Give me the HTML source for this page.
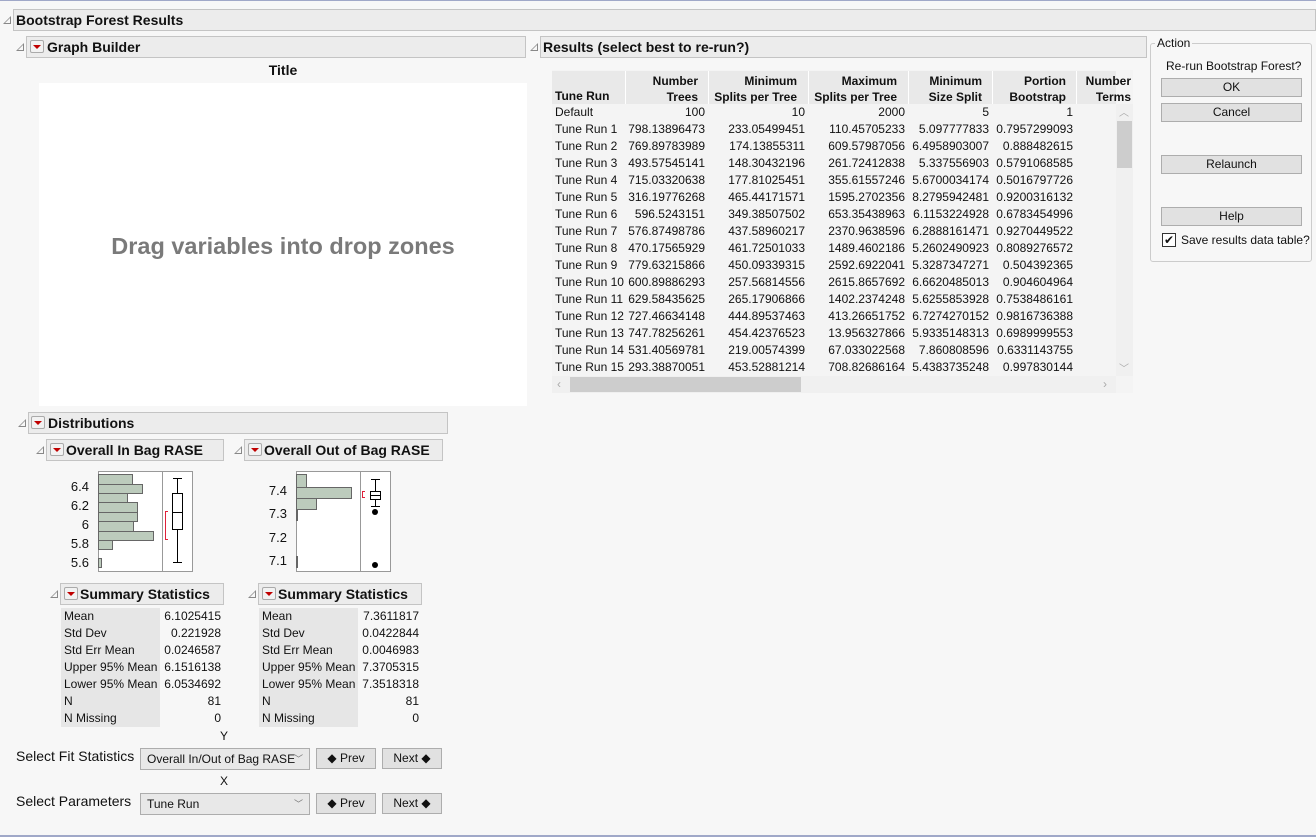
<!DOCTYPE html>
<html><head><meta charset="utf-8"><style>
*{margin:0;padding:0;box-sizing:border-box}
body{width:1316px;height:837px;background:#f7f7f7;font-family:"Liberation Sans",Arial,sans-serif;font-size:12px;color:#111;position:relative;overflow:hidden}
.a{position:absolute;white-space:nowrap}
.hdr{position:absolute;background:#ececec;border:1px solid #c4c4c4;font-weight:bold;font-size:14px;line-height:20px;padding-left:2px}
.tri{position:absolute;width:0;height:0;border-left:8px solid transparent;border-bottom:8px solid #888;}
.tri:after{content:"";position:absolute;left:-6px;top:2px;width:0;height:0;border-left:5px solid transparent;border-bottom:5px solid #f7f7f7}
.rb{position:absolute;width:14px;height:13px;border:1px solid #aaa;background:#f2f2f2;border-radius:2px}
.rb:after{content:"";position:absolute;left:2px;top:4px;border-left:4px solid transparent;border-right:4px solid transparent;border-top:4px solid #c00000}
.btn{position:absolute;background:#e1e1e1;border:1px solid #adadad;text-align:center;font-size:12px;line-height:16px}
.r{text-align:right}
.bar{position:absolute;background:#bccbbc;border:1px solid #666}
</style></head><body>
<div class="a" style="left:0;top:0;width:1316px;height:1px;background:#a0a8c8"></div>
<div class="a" style="left:0;top:835px;width:1316px;height:2px;background:#a0a8c8"></div>

<div class="tri" style="left:3px;top:16px"></div>
<div class="hdr" style="left:13px;top:9px;width:1303px;height:22px">Bootstrap Forest Results</div>

<div class="tri" style="left:16px;top:43px"></div>
<div class="hdr" style="left:26px;top:36px;width:500px;height:22px;padding-left:20px">Graph Builder</div>
<div class="rb" style="left:30px;top:40px"></div>
<div class="a" style="left:39px;top:62px;width:488px;text-align:center;font-weight:bold;font-size:14px">Title</div>
<div class="a" style="left:39px;top:83px;width:488px;height:323px;background:#fff"></div>
<div class="a" style="left:39px;top:233px;width:488px;text-align:center;font-weight:bold;font-size:23.5px;color:#7a7a7a">Drag variables into drop zones</div>

<div class="tri" style="left:530px;top:43px"></div>
<div class="hdr" style="left:540px;top:36px;width:607px;height:22px">Results (select best to re-run?)</div>

<!-- table -->
<div class="a" style="left:552px;top:70px;width:581px;height:323px;background:#f4f4f4"></div>
<div class="a" style="left:552px;top:71px;width:564px;height:33px;background:#e9e9e9"></div>
<div class="a" style="left:625px;top:71px;width:1px;height:33px;background:#fff"></div>
<div class="a" style="left:708px;top:71px;width:1px;height:33px;background:#fff"></div>
<div class="a" style="left:808px;top:71px;width:1px;height:33px;background:#fff"></div>
<div class="a" style="left:908px;top:71px;width:1px;height:33px;background:#fff"></div>
<div class="a" style="left:992px;top:71px;width:1px;height:33px;background:#fff"></div>
<div class="a" style="left:1076px;top:71px;width:1px;height:33px;background:#fff"></div>
<div class="a" style="left:555px;top:89px;font-weight:bold">Tune Run</div>
<div class="a r" style="left:605px;top:73px;width:93px;font-weight:bold;line-height:16px">Number<br>Trees</div>
<div class="a r" style="left:697px;top:73px;width:100px;font-weight:bold;line-height:16px">Minimum<br>Splits per Tree</div>
<div class="a r" style="left:797px;top:73px;width:100px;font-weight:bold;line-height:16px">Maximum<br>Splits per Tree</div>
<div class="a r" style="left:897px;top:73px;width:85px;font-weight:bold;line-height:16px">Minimum<br>Size Split</div>
<div class="a r" style="left:980px;top:73px;width:86px;font-weight:bold;line-height:16px">Portion<br>Bootstrap</div>
<div class="a r" style="left:1070px;top:73px;width:61px;font-weight:bold;line-height:16px;overflow:hidden">Number<br>Terms</div>
<div class="a" style="left:555px;top:104px;line-height:17px">Default<br>Tune Run 1<br>Tune Run 2<br>Tune Run 3<br>Tune Run 4<br>Tune Run 5<br>Tune Run 6<br>Tune Run 7<br>Tune Run 8<br>Tune Run 9<br>Tune Run 10<br>Tune Run 11<br>Tune Run 12<br>Tune Run 13<br>Tune Run 14<br>Tune Run 15</div>
<div class="a r" style="left:605px;top:104px;width:100px;line-height:17px">100<br>798.13896473<br>769.89783989<br>493.57545141<br>715.03320638<br>316.19776268<br>596.5243151<br>576.87498786<br>470.17565929<br>779.63215866<br>600.89886293<br>629.58435625<br>727.46634148<br>747.78256261<br>531.40569781<br>293.38870051</div>
<div class="a r" style="left:705px;top:104px;width:100px;line-height:17px">10<br>233.05499451<br>174.13855311<br>148.30432196<br>177.81025451<br>465.44171571<br>349.38507502<br>437.58960217<br>461.72501033<br>450.09339315<br>257.56814556<br>265.17906866<br>444.89537463<br>454.42376523<br>219.00574399<br>453.52881214</div>
<div class="a r" style="left:805px;top:104px;width:100px;line-height:17px">2000<br>110.45705233<br>609.57987056<br>261.72412838<br>355.61557246<br>1595.2702356<br>653.35438963<br>2370.9638596<br>1489.4602186<br>2592.6922041<br>2615.8657692<br>1402.2374248<br>413.26651752<br>13.956327866<br>67.033022568<br>708.82686164</div>
<div class="a r" style="left:889px;top:104px;width:100px;line-height:17px">5<br>5.097777833<br>6.4958903007<br>5.337556903<br>5.6700034174<br>8.2795942481<br>6.1153224928<br>6.2888161471<br>5.2602490923<br>5.3287347271<br>6.6620485013<br>5.6255853928<br>6.7274270152<br>5.9335148313<br>7.860808596<br>5.4383735248</div>
<div class="a r" style="left:973px;top:104px;width:100px;line-height:17px">1<br>0.7957299093<br>0.888482615<br>0.5791068585<br>0.5016797726<br>0.9200316132<br>0.6783454996<br>0.9270449522<br>0.8089276572<br>0.504392365<br>0.904604964<br>0.7538486161<br>0.9816736388<br>0.6989999553<br>0.6331143755<br>0.997830144</div>
<div class="a" style="left:1116px;top:104px;width:17px;height:272px;background:#f0f0f0"></div>
<div class="a" style="left:1117px;top:121px;width:15px;height:47px;background:#cdcdcd"></div>
<div class="a" style="left:1119px;top:104px;font-size:10px;color:#aaa">︿</div>
<div class="a" style="left:1119px;top:360px;font-size:10px;color:#aaa">﹀</div>
<div class="a" style="left:552px;top:376px;width:564px;height:17px;background:#f0f0f0"></div>
<div class="a" style="left:570px;top:377px;width:231px;height:15px;background:#cdcdcd"></div>
<div class="a" style="left:557px;top:377px;color:#aaa">‹</div>
<div class="a" style="left:1103px;top:377px;color:#aaa">›</div>

<!-- Action -->
<div class="a" style="left:1150px;top:43px;width:162px;height:219px;border:1px solid #ccc;border-radius:3px"></div>
<div class="a" style="left:1155px;top:36px;background:#f7f7f7;padding:0 2px">Action</div>
<div class="a" style="left:1166px;top:59px">Re-run Bootstrap Forest?</div>
<div class="btn" style="left:1161px;top:78px;width:141px;height:19px">OK</div>
<div class="btn" style="left:1161px;top:103px;width:141px;height:19px">Cancel</div>
<div class="btn" style="left:1161px;top:155px;width:141px;height:19px">Relaunch</div>
<div class="btn" style="left:1161px;top:207px;width:141px;height:19px">Help</div>
<div class="a" style="left:1162px;top:233px;width:14px;height:14px;border:1px solid #333;background:#fff;font-size:12px;line-height:12px;text-align:center">✔</div>
<div class="a" style="left:1181px;top:233px">Save results data table?</div>

<!-- Distributions -->
<div class="tri" style="left:18px;top:419px"></div>
<div class="hdr" style="left:28px;top:412px;width:420px;height:22px;padding-left:19px">Distributions</div>
<div class="rb" style="left:31px;top:416px"></div>

<div class="tri" style="left:36px;top:446px"></div>
<div class="hdr" style="left:46px;top:439px;width:178px;height:22px;padding-left:19px">Overall In Bag RASE</div>
<div class="rb" style="left:50px;top:443px"></div>
<div class="tri" style="left:234px;top:446px"></div>
<div class="hdr" style="left:244px;top:439px;width:199px;height:22px;padding-left:19px">Overall Out of Bag RASE</div>
<div class="rb" style="left:248px;top:443px"></div>

<!-- plot 1 -->
<div class="a" style="left:98px;top:471px;width:95px;height:101px;background:#fff;border:1px solid #999"></div>
<div class="a" style="left:162px;top:471px;width:1px;height:101px;background:#999"></div>
<div class="bar" style="left:98px;top:474px;width:35px;height:11px"></div>
<div class="bar" style="left:98px;top:484px;width:45px;height:10px"></div>
<div class="bar" style="left:98px;top:493px;width:30px;height:10px"></div>
<div class="bar" style="left:98px;top:502px;width:40px;height:11px"></div>
<div class="bar" style="left:98px;top:512px;width:40px;height:10px"></div>
<div class="bar" style="left:98px;top:521px;width:36px;height:11px"></div>
<div class="bar" style="left:98px;top:531px;width:56px;height:10px"></div>
<div class="bar" style="left:98px;top:540px;width:15px;height:10px"></div>
<div class="bar" style="left:98px;top:558px;width:4px;height:10px"></div>
<div class="a r" style="left:60px;top:477px;width:29px;line-height:19px;font-size:13px">6.4<br>6.2<br>6<br>5.8<br>5.6</div>
<div class="a" style="left:177px;top:478px;width:1px;height:84px;background:#000"></div>
<div class="a" style="left:173px;top:478px;width:9px;height:1px;background:#000"></div>
<div class="a" style="left:173px;top:562px;width:9px;height:1px;background:#000"></div>
<div class="a" style="left:172px;top:493px;width:11px;height:37px;background:#fff;border:1px solid #000"></div>
<div class="a" style="left:172px;top:512px;width:11px;height:1px;background:#000"></div>
<div class="a" style="left:165px;top:511px;width:3px;height:29px;border:1px solid #e0203a;border-right:none"></div>

<!-- plot 2 -->
<div class="a" style="left:296px;top:471px;width:95px;height:101px;background:#fff;border:1px solid #999"></div>
<div class="a" style="left:360px;top:471px;width:1px;height:101px;background:#999"></div>
<div class="bar" style="left:296px;top:474px;width:11px;height:14px"></div>
<div class="bar" style="left:296px;top:487px;width:56px;height:12px"></div>
<div class="bar" style="left:296px;top:498px;width:21px;height:12px"></div>
<div class="bar" style="left:296px;top:509px;width:2px;height:12px"></div>
<div class="bar" style="left:296px;top:556px;width:2px;height:12px"></div>
<div class="a r" style="left:258px;top:479px;width:29px;line-height:23.3px;font-size:13px">7.4<br>7.3<br>7.2<br>7.1</div>
<div class="a" style="left:375px;top:479px;width:1px;height:27px;background:#000"></div>
<div class="a" style="left:371px;top:479px;width:9px;height:1px;background:#000"></div>
<div class="a" style="left:371px;top:506px;width:9px;height:1px;background:#000"></div>
<div class="a" style="left:370px;top:491px;width:11px;height:9px;background:#fff;border:1px solid #000"></div>
<div class="a" style="left:370px;top:495px;width:11px;height:1px;background:#000"></div>
<div class="a" style="left:372px;top:509px;width:6px;height:6px;border-radius:50%;background:#000"></div>
<div class="a" style="left:372px;top:562px;width:6px;height:6px;border-radius:50%;background:#000"></div>
<div class="a" style="left:362px;top:491px;width:3px;height:7px;border:1px solid #e0203a;border-right:none"></div>

<!-- Summary -->
<div class="tri" style="left:50px;top:590px"></div>
<div class="hdr" style="left:60px;top:583px;width:164px;height:22px;padding-left:19px">Summary Statistics</div>
<div class="rb" style="left:64px;top:587px"></div>
<div class="tri" style="left:248px;top:590px"></div>
<div class="hdr" style="left:258px;top:583px;width:164px;height:22px;padding-left:19px">Summary Statistics</div>
<div class="rb" style="left:262px;top:587px"></div>

<div class="a" style="left:61px;top:608px;width:99px;height:119px;background:#e6e6e6"></div>
<div class="a" style="left:64px;top:608px;line-height:17px">Mean<br>Std Dev<br>Std Err Mean<br>Upper 95% Mean<br>Lower 95% Mean<br>N<br>N Missing</div>
<div class="a r" style="left:160px;top:608px;width:61px;line-height:17px">6.1025415<br>0.221928<br>0.0246587<br>6.1516138<br>6.0534692<br>81<br>0</div>
<div class="a" style="left:259px;top:608px;width:99px;height:119px;background:#e6e6e6"></div>
<div class="a" style="left:262px;top:608px;line-height:17px">Mean<br>Std Dev<br>Std Err Mean<br>Upper 95% Mean<br>Lower 95% Mean<br>N<br>N Missing</div>
<div class="a r" style="left:358px;top:608px;width:61px;line-height:17px">7.3611817<br>0.0422844<br>0.0046983<br>7.3705315<br>7.3518318<br>81<br>0</div>

<!-- bottom controls -->
<div class="a" style="left:220px;top:729px">Y</div>
<div class="a" style="left:16px;top:748px;font-size:14px">Select Fit Statistics</div>
<div class="a" style="left:140px;top:748px;width:170px;height:22px;border:1px solid #adadad;background:#e8e8e8;padding-left:6px;line-height:20px">Overall In/Out of Bag RASE<span style="position:absolute;right:6px;color:#777;font-size:9px">﹀</span></div>
<div class="btn" style="left:316px;top:748px;width:60px;height:21px;line-height:19px">◆ Prev</div>
<div class="btn" style="left:382px;top:748px;width:60px;height:21px;line-height:19px">Next ◆</div>
<div class="a" style="left:220px;top:774px">X</div>
<div class="a" style="left:16px;top:793px;font-size:14px">Select Parameters</div>
<div class="a" style="left:140px;top:793px;width:170px;height:22px;border:1px solid #adadad;background:#e8e8e8;padding-left:6px;line-height:20px">Tune Run<span style="position:absolute;right:6px;color:#777;font-size:9px">﹀</span></div>
<div class="btn" style="left:316px;top:793px;width:60px;height:21px;line-height:19px">◆ Prev</div>
<div class="btn" style="left:382px;top:793px;width:60px;height:21px;line-height:19px">Next ◆</div>
</body></html>
